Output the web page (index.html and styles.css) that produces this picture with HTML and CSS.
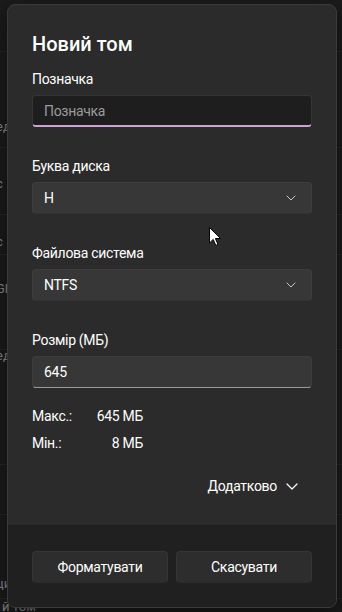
FILE: index.html
```html
<!DOCTYPE html>
<html lang="uk">
<head>
<meta charset="utf-8">
<title>Новий том</title>
<link rel="stylesheet" href="styles.css">
</head>
<body>
<div class="backdrop">
  <div class="bg-row r1"></div>
  <div class="bg-row r2"><span class="frag">ед</span></div>
  <div class="bg-row r3"><span class="frag">с</span></div>
  <div class="bg-row r4"><span class="frag">с</span></div>
  <div class="bg-row r5"><span class="frag">GБ</span></div>
  <div class="bg-row r6"><span class="frag">ед</span></div>
  <div class="bg-row r7"></div>
  <div class="bg-row r8"><span class="frag">ци</span></div>
  <div class="bg-row r9"><span class="frag">й том</span></div>
</div>

<div class="dialog">
  <div class="body">
    <h1 class="title">Новий том</h1>

    <div class="field">
      <label class="label">Позначка</label>
      <div class="textbox focused"><span class="placeholder">Позначка</span></div>
    </div>

    <div class="field">
      <label class="label">Буква диска</label>
      <div class="combo"><span>H</span>
        <svg class="chev" width="10" height="6" viewBox="0 0 10 6"><path d="M1 1 L5 5 L9 1" fill="none" stroke="#c8c8c8" stroke-width="1" stroke-linecap="round" stroke-linejoin="round"/></svg>
      </div>
    </div>

    <div class="field">
      <label class="label">Файлова система</label>
      <div class="combo"><span>NTFS</span>
        <svg class="chev" width="10" height="6" viewBox="0 0 10 6"><path d="M1 1 L5 5 L9 1" fill="none" stroke="#c8c8c8" stroke-width="1" stroke-linecap="round" stroke-linejoin="round"/></svg>
      </div>
    </div>

    <div class="field">
      <label class="label">Розмір (МБ)</label>
      <div class="textbox filled"><span>645</span></div>
    </div>

    <div class="limits">
      <span class="lim-key">Макс.:</span><span class="lim-val">645 МБ</span>
      <span class="lim-key">Мін.:</span><span class="lim-val">8 МБ</span>
    </div>

    <div class="more-row">
      <button class="more">Додатково
        <svg width="12" height="7" viewBox="0 0 12 7"><path d="M1 1 L6 6 L11 1" fill="none" stroke="#ffffff" stroke-width="1.2" stroke-linecap="round" stroke-linejoin="round"/></svg>
      </button>
    </div>
  </div>

  <div class="footer">
    <button class="btn">Форматувати</button>
    <button class="btn">Скасувати</button>
  </div>
</div>

<svg class="cursor" width="13" height="20" viewBox="0 0 13 20">
  <path d="M0.5 0.5 L0.5 16 L4.2 12.4 L6.8 18.4 L9 17.4 L6.4 11.5 L11.5 11.5 Z" fill="#ffffff" stroke="#000000" stroke-width="1" stroke-linejoin="round"/>
</svg>
</body>
</html>
```

FILE: styles.css
```css
* { box-sizing: border-box; }

html, body {
  margin: 0;
  padding: 0;
  width: 342px;
  height: 612px;
  overflow: hidden;
  background: #1b1b1b;
  font-family: Roboto, "Noto Sans", sans-serif;
  color: #ffffff;
}

body { position: relative; }

.backdrop {
  display: flex;
  flex-direction: column;
}

.bg-row {
  border-bottom: 1px solid #262626;
  display: flex;
  align-items: flex-end;
  font-size: 13px;
  color: #8a8a8a;
  line-height: 16px;
}
.frag { margin-left: -4px; }
.r1 { height: 52px; }
.r2 { height: 96px; padding-bottom: 12px; }
.r3 { height: 67px; padding-bottom: 22px; }
.r4 { height: 40px; padding-bottom: 4px; }
.r5 { height: 95px; padding-bottom: 52px; }
.r6 { height: 115px; padding-bottom: 100px; }
.r7 { height: 50px; }
.r8 { height: 84px; padding-bottom: 6px; }
.r9 { height: 20px; align-items: flex-start; padding-left: 6px; }

.dialog {
  position: absolute;
  left: 7px;
  top: 4px;
  width: 330px;
  height: 604px;
  background: #2b2b2b;
  border: 1px solid #3a3a3a;
  border-radius: 8px;
  overflow: hidden;
  display: flex;
  flex-direction: column;
  box-shadow: 0 8px 24px rgba(0, 0, 0, 0.5);
}

.body {
  flex: 1;
  padding: 25px 24px 0 24px;
  display: flex;
  flex-direction: column;
}

.title {
  margin: 0 0 11px 0;
  font-size: 20px;
  line-height: 28px;
  font-weight: 500;
}

.field {
  display: flex;
  flex-direction: column;
  gap: 6px;
  margin-bottom: 29px;
}
.field:nth-of-type(4) { margin-bottom: 18px; }

.label {
  font-size: 14px;
  line-height: 20px;
  letter-spacing: -0.3px;
}

.textbox, .combo {
  height: 32px;
  border-radius: 4px;
  font-size: 14px;
  line-height: 20px;
  letter-spacing: -0.3px;
  display: flex;
  align-items: center;
  padding: 0 11px;
}

.textbox.focused {
  background: #1e1e1e;
  border: 1px solid #353535;
  border-bottom: 2px solid #cda3d6;
}
.placeholder { color: #9b9b9b; }

.textbox.filled {
  background: #373737;
  border: 1px solid #3c3c3c;
  border-bottom: 1px solid #9a9a9a;
}

.combo {
  background: #373737;
  border: 1px solid #3d3d3d;
  border-bottom-color: #333333;
  justify-content: space-between;
  padding-right: 15px;
}

.limits {
  display: grid;
  grid-template-columns: 60px 51px;
  row-gap: 7px;
  font-size: 14px;
  line-height: 20px;
  letter-spacing: -0.3px;
}
.lim-val { justify-self: end; }

.more-row {
  display: flex;
  justify-content: flex-end;
  margin-top: 23px;
}

.more {
  background: none;
  border: none;
  color: #ffffff;
  font-family: inherit;
  font-size: 14px;
  line-height: 20px;
  letter-spacing: -0.3px;
  padding: 0;
  margin-right: 14px;
  display: flex;
  align-items: center;
  gap: 9px;
}

.footer {
  background: #202020;
  border-top: 1px solid #1d1d1d;
  padding: 25px 24px 24px 24px;
  display: grid;
  grid-template-columns: 1fr 1fr;
  gap: 8px;
}

.btn {
  height: 32px;
  background: #2d2d2d;
  border: 1px solid #353535;
  border-bottom-color: #2a2a2a;
  border-radius: 4px;
  color: #ffffff;
  font-family: inherit;
  font-size: 14px;
  line-height: 20px;
  letter-spacing: -0.3px;
  padding: 0;
}

.cursor {
  position: absolute;
  left: 209px;
  top: 227px;
}
```
